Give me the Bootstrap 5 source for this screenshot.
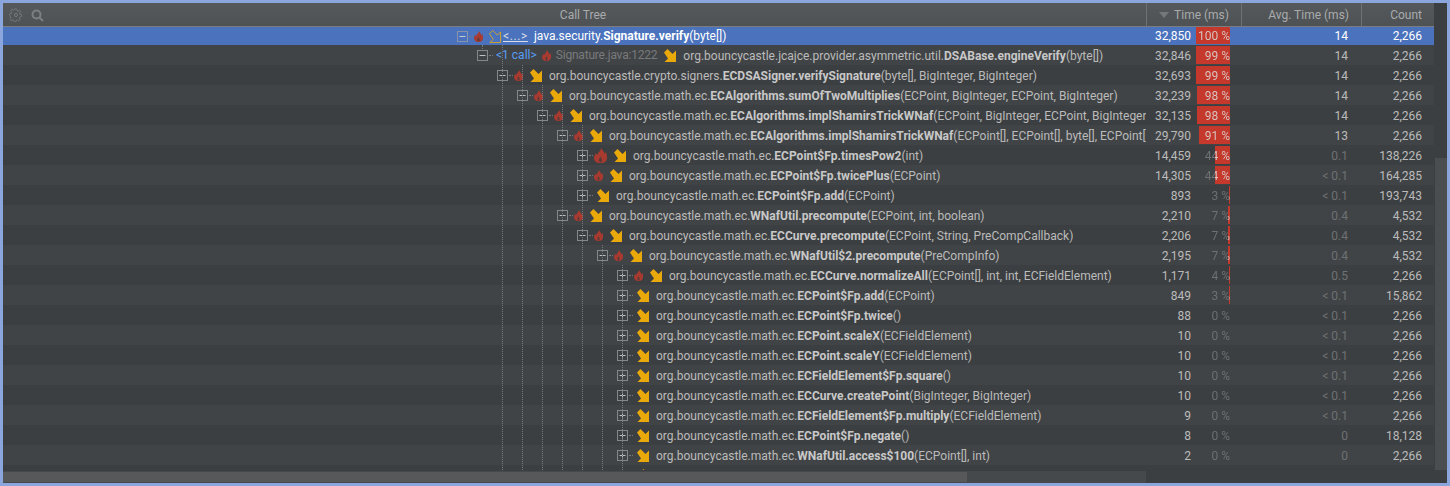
<!DOCTYPE html>
<html lang="en">
<head>
  <meta charset="UTF-8">
  <title>Call Tree</title>
  <link href="https://cdn.jsdelivr.net/npm/bootstrap@5.3.3/dist/css/bootstrap.min.css" rel="stylesheet">
  <style>
    html, body { height: 486px; overflow: hidden; background: #8ba6dc; }
    body { padding: 3px; font: 12px/20px Roboto, sans-serif; color: #bbb; }
    .shell { width: 1444px; height: 480px; background: #3c3f41; }
    .main-pane { width: 1431px; }
    .head-bar { height: 24px; background: linear-gradient(#55595b, #4e5254); border-bottom: 1px solid #7a7d7f; color: #a9abad; line-height: 24px; }
    .head-tree { width: 1143px; padding-left: 17px; }
    .head-tools { left: 6px; top: 5px; }
    .head-cell { border-left: 1px solid #6f7274; padding-right: 12px; }
    .head-time { width: 95px; }
    .head-avg { width: 120px; }
    .head-count { width: 73px; }
    .sort-arrow { width: 0; height: 0; border: 5px solid transparent; border-top: 6px solid #75787a; border-bottom: 0; margin-right: 5px; }
    .tree-body { height: 443px; overflow: hidden; }
    .tree-row { height: 20px; line-height: 22px; background: #3c3f41; white-space: nowrap; }
    .tree-row:nth-child(even) { background: #414446; }
    .tree-row.first-row { height: 18px; line-height: 18px; background: #4a72bd; color: #fff; }
    .tree-cell { width: 1143px; overflow: hidden; }
    .num-time { width: 45px; text-align: right; }
    .num-pct { width: 34px; margin: 1px 0 0 5px; height: 18px; line-height: 20px; text-align: right; background: linear-gradient(#c5392d, #c5392d) right center / var(--bar) 18px no-repeat; }
    .first-row .num-pct { margin-top: 0; height: 17px; line-height: 18px; }
    .pct-text { display: block; color: transparent; background: linear-gradient(to right, #6e7173 calc(100% - var(--bar)), #d8c9c7 calc(100% - var(--bar))); -webkit-background-clip: text; background-clip: text; }
    .num-avg { width: 118px; text-align: right; }
    .num-count { width: 74px; text-align: right; }
    .dim { color: #6e7173; }
    .first-row .dim { color: #fff; }
    .toggle-box { width: 11px; height: 11px; flex: none; display: block; }
    .link-dots { width: 4px; border-top: 1px dotted #77797b; flex: none; margin-left: 1px; }
    .flame { flex: none; display: block; margin-left: 1px; }
    .hot-arrow { flex: none; display: block; margin: 0 6px 0 7px; }
    .hot-arrow.no-flame { margin-left: 4px; }
    .hollow-arrow { margin-right: 1px; margin-left: 6px; }
    .call-link { color: #589df6; margin-left: 3px; }
    .src-link { color: #787a7c; margin-left: 4px; gap: 5px; letter-spacing: -.2px; }
    .more-link { color: #d8dde6; text-decoration: underline; margin-right: 6px; letter-spacing: .6px; }
    .tree-text { padding-top: 2px; line-height: 20px; }
    .first-row .tree-text { padding-top: 0; line-height: 18px; }
    .tree-text b { font-weight: 700; color: #c8c8c8; }
    .first-row .tree-text b { color: #fff; }
    .guide-line { width: 1px; border-left: 1px dotted #77797b; }
    .scroll-v { width: 13px; }
    .scroll-v-thumb { height: 312px; margin-top: 155px; margin-left: 1px; background: #4b4e50; }
    .scroll-h { height: 13px; }
    .scroll-h-track { width: 1143px; height: 12px; margin-top: 1px; padding-top: 1px; background: #46494b; }
    .scroll-h-thumb { height: 10px; width: 964px; background: #565859; }
  </style>
</head>
<body>
  <div class="shell d-flex">
    <div class="main-pane d-flex flex-column">
      <div class="head-bar d-flex position-relative">
        <div class="head-tools position-absolute d-flex gap-2 align-items-center">
          <svg width="14" height="14" viewBox="0 0 14 14" fill="none" stroke="#75787a"><circle cx="7" cy="7" r="1.6"/><path d="M5.8 1h2.4l.3 1.800 1.300.6 1.600-1 1.200 1.600-1.200 1.400.3 1.300 1.700.5v2l-1.700.5-.5 1.300.9 1.500-1.600 1.300-1.400-1-1.200.4-.4 1.700H5.800l-.4-1.700-1.200-.4-1.400 1-1.600-1.300.9-1.500-.5-1.300L.9 8.200v-2l1.700-.5.3-1.300-1.200-1.400 1.200-1.600 1.600 1 1.300-.6z" transform="scale(.93)"/></svg>
          <svg width="13" height="13" viewBox="0 0 13 13" fill="none" stroke="#7d8082" stroke-width="2"><circle cx="5.500" cy="5.500" r="4"/><path d="M8.500 8.500 12 12"/></svg>
        </div>
        <div class="head-tree text-center">Call Tree</div>
        <div class="head-cell head-time d-flex justify-content-end align-items-center"><span class="sort-arrow"></span>Time (ms)</div>
        <div class="head-cell head-avg text-end">Avg. Time (ms)</div>
        <div class="head-cell head-count text-end">Count</div>
      </div>
      <div class="tree-body position-relative" id="treeBody"></div>
      <div class="scroll-h"><div class="scroll-h-track"><div class="scroll-h-thumb"></div></div></div>
    </div>
    <div class="scroll-v"><div class="scroll-v-thumb"></div></div>
  </div>
<script>
  const P = "org.bouncycastle.math.ec.";
  // c = x of the toggle box centre, open = expanded, fl = flame (0 none, 1 small, 2 big)
  const filas = [
    { c: 462, open: 1, fl: 1, pre: "java.security.", bold: "Signature.verify", args: "(byte[])", t: "32,850", p: 100, a: "14", n: "2,266", first: 1 },
    { c: 482, open: 1, fl: 0, call: 1, pre: "org.bouncycastle.jcajce.provider.asymmetric.util.", bold: "DSABase.engineVerify", args: "(byte[])", t: "32,846", p: 99, a: "14", n: "2,266" },
    { c: 502, open: 1, fl: 1, pre: "org.bouncycastle.crypto.signers.", bold: "ECDSASigner.verifySignature", args: "(byte[], BigInteger, BigInteger)", t: "32,693", p: 99, a: "14", n: "2,266" },
    { c: 522, open: 1, fl: 1, pre: P, bold: "ECAlgorithms.sumOfTwoMultiplies", args: "(ECPoint, BigInteger, ECPoint, BigInteger)", t: "32,239", p: 98, a: "14", n: "2,266" },
    { c: 542, open: 1, fl: 1, pre: P, bold: "ECAlgorithms.implShamirsTrickWNaf", args: "(ECPoint, BigInteger, ECPoint, BigInteger)", t: "32,135", p: 98, a: "14", n: "2,266" },
    { c: 562, open: 1, fl: 1, pre: P, bold: "ECAlgorithms.implShamirsTrickWNaf", args: "(ECPoint[], ECPoint[], byte[], ECPoint[])", t: "29,790", p: 91, a: "13", n: "2,266" },
    { c: 582, open: 0, fl: 2, pre: P, bold: "ECPoint$Fp.timesPow2", args: "(int)", t: "14,459", p: 44, a: "0.1", n: "138,226", dim: 1 },
    { c: 582, open: 0, fl: 1, pre: P, bold: "ECPoint$Fp.twicePlus", args: "(ECPoint)", t: "14,305", p: 44, a: "< 0.1", n: "164,285", dim: 1 },
    { c: 582, open: 0, fl: 0, pre: P, bold: "ECPoint$Fp.add", args: "(ECPoint)", t: "893", p: 3, a: "< 0.1", n: "193,743", dim: 1 },
    { c: 562, open: 1, fl: 1, pre: P, bold: "WNafUtil.precompute", args: "(ECPoint, int, boolean)", t: "2,210", p: 7, a: "0.4", n: "4,532", dim: 1 },
    { c: 582, open: 1, fl: 1, pre: P, bold: "ECCurve.precompute", args: "(ECPoint, String, PreCompCallback)", t: "2,206", p: 7, a: "0.4", n: "4,532", dim: 1 },
    { c: 602, open: 1, fl: 1, pre: P, bold: "WNafUtil$2.precompute", args: "(PreCompInfo)", t: "2,195", p: 7, a: "0.4", n: "4,532", dim: 1 },
    { c: 622, open: 0, fl: 1, pre: P, bold: "ECCurve.normalizeAll", args: "(ECPoint[], int, int, ECFieldElement)", t: "1,171", p: 4, a: "0.5", n: "2,266", dim: 1 },
    { c: 622, open: 0, fl: 0, pre: P, bold: "ECPoint$Fp.add", args: "(ECPoint)", t: "849", p: 3, a: "< 0.1", n: "15,862", dim: 1 },
    { c: 622, open: 0, fl: 0, pre: P, bold: "ECPoint$Fp.twice", args: "()", t: "88", p: 0, a: "< 0.1", n: "2,266", dim: 1 },
    { c: 622, open: 0, fl: 0, pre: P, bold: "ECPoint.scaleX", args: "(ECFieldElement)", t: "10", p: 0, a: "< 0.1", n: "2,266", dim: 1 },
    { c: 622, open: 0, fl: 0, pre: P, bold: "ECPoint.scaleY", args: "(ECFieldElement)", t: "10", p: 0, a: "< 0.1", n: "2,266", dim: 1 },
    { c: 622, open: 0, fl: 0, pre: P, bold: "ECFieldElement$Fp.square", args: "()", t: "10", p: 0, a: "< 0.1", n: "2,266", dim: 1 },
    { c: 622, open: 0, fl: 0, pre: P, bold: "ECCurve.createPoint", args: "(BigInteger, BigInteger)", t: "10", p: 0, a: "< 0.1", n: "2,266", dim: 1 },
    { c: 622, open: 0, fl: 0, pre: P, bold: "ECFieldElement$Fp.multiply", args: "(ECFieldElement)", t: "9", p: 0, a: "< 0.1", n: "2,266", dim: 1 },
    { c: 622, open: 0, fl: 0, pre: P, bold: "ECPoint$Fp.negate", args: "()", t: "8", p: 0, a: "0", n: "18,128", dim: 1 },
    { c: 622, open: 0, fl: 0, pre: P, bold: "WNafUtil.access$100", args: "(ECPoint[], int)", t: "2", p: 0, a: "0", n: "2,266", dim: 1 }
  ];

  const FLAME = "M5 0c.4 1.800 2 2.600 2.400 4.600C8 4.200 8 3.600 8 3c1 1.500 1 3.500 1 5 0 2.500-1.800 4-4 4H4C1.800 12 0 10.500 0 8c0-1.800.8-3 1.600-4 0 .8.2 1.200.6 1.600C2.600 3.600 4.600 2.400 5 0z";
  const flama = (big) => {
    const w = big ? 13 : 9, h = big ? 15 : 11;
    return `<svg class="flame" width="${w}" height="${h}" viewBox="0 0 9 12" preserveAspectRatio="none"><path fill="#a83a30" d="${FLAME}"/><path fill="#5e3a36" d="M4.500 6.500C4 8 3.400 8.500 3.400 9.800c0 1 .5 1.700 1.100 1.700s1.100-.7 1.100-1.700c0-1.300-.6-1.800-1.100-3.300z"/></svg>`;
  };
  const ARROW = "M0 3.500 3.500 0l5 5L12 1.500V13H.5L4 9.500z";
  const flecha = (hollow, noFlame) => hollow
    ? `<svg class="hot-arrow hollow-arrow" width="13" height="13" viewBox="-.5 -.5 14 14" fill="none" stroke="#d9a520"><path d="${ARROW}"/></svg>`
    : `<svg class="hot-arrow ${noFlame ? "no-flame" : ""}" width="13" height="13" viewBox="0 0 13 13"><path fill="#e9a90b" d="${ARROW}"/></svg>`;
  const caja = (open, first) => {
    const col = first ? "#8a94a8" : "#85888a";
    return `<svg class="toggle-box" viewBox="0 0 11 11"><rect x=".5" y=".5" width="10" height="10" fill="none" stroke="${col}"/><path d="M2.500 5.500h6${open ? "" : "M5.500 2.500v6"}" stroke="${first ? "#c3c9d6" : "#c0c0c0"}"/></svg>`;
  };

  const cuerpo = document.getElementById("treeBody");
  filas.forEach((f) => {
    const barra = f.p === 0 ? 0 : Math.max(1, Math.round(f.p * 34 / 100));
    let iconos = caja(f.open, f.first) + '<span class="link-dots"></span>';
    if (f.first) iconos += flama(0) + flecha(true) + '<span class="more-link">&lt;...&gt;</span>';
    else if (f.call) iconos += '<span class="call-link">&lt;1 call&gt;</span><span class="src-link d-inline-flex align-items-center">' + flama(0) + 'Signature.java:1222</span>' + flecha();
    else iconos += (f.fl ? flama(f.fl === 2) : "") + flecha(false, !f.fl);
    cuerpo.insertAdjacentHTML("beforeend", `
      <div class="tree-row d-flex ${f.first ? "first-row" : ""}">
        <div class="tree-cell d-flex align-items-center" style="padding-left:${f.c - 8}px">${iconos}
          <span class="tree-text">${f.pre}<b>${f.bold}</b>${f.args}</span>
        </div>
        <div class="num-time">${f.t}</div>
        <div class="num-pct" style="--bar:${barra}px"><span class="pct-text">${f.p} %</span></div>
        <div class="num-avg ${f.dim ? "dim" : ""}">${f.a.replace("<", "&lt;")}</div>
        <div class="num-count">${f.n}</div>
      </div>`);
  });
  // last row only peeks out under the viewport
  cuerpo.insertAdjacentHTML("beforeend", `<div class="tree-row d-flex"><div class="tree-cell d-flex align-items-center" style="padding-left:633px">${flecha(false, true)}</div></div>`);

  // dotted guides of the tree: [x, top, bottom]
  [[482, 18, 22], [502, 18, 443], [522, 38, 443], [542, 58, 443], [562, 78, 443], [582, 98, 443], [602, 218, 443], [622, 238, 443]].forEach(g => {
    cuerpo.insertAdjacentHTML("beforeend", `<span class="guide-line position-absolute" style="left:${g[0] - 3}px;top:${g[1]}px;height:${g[2] - g[1]}px"></span>`);
  });
</script>
<script src="https://cdn.jsdelivr.net/npm/bootstrap@5.3.3/dist/js/bootstrap.bundle.min.js"></script>
</body>
</html>
